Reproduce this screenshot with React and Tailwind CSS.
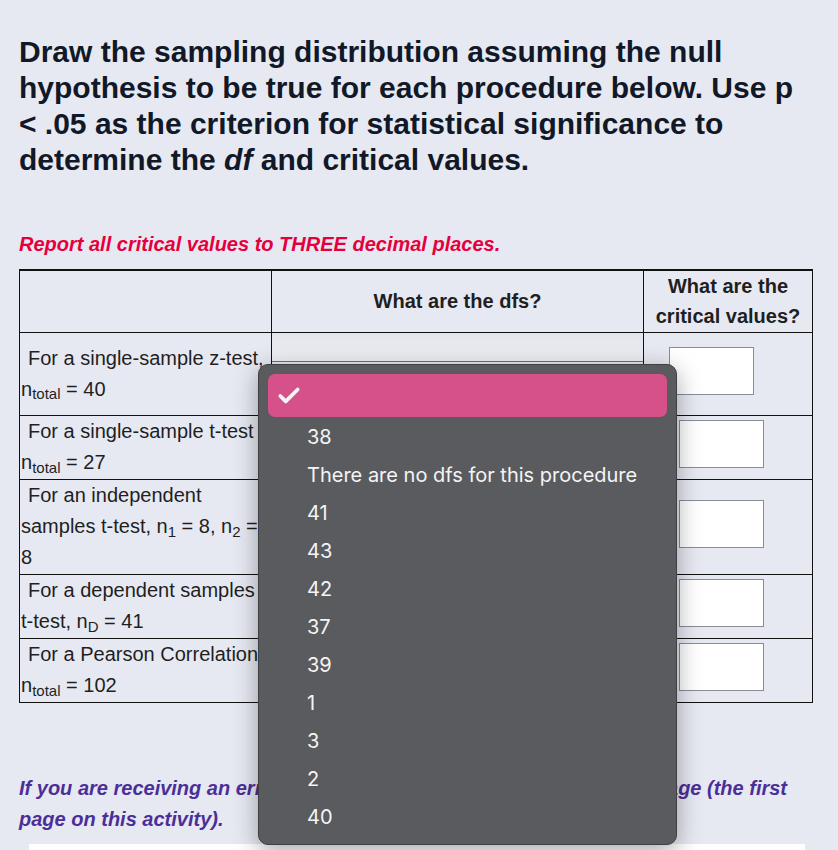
import { Check } from "lucide-react";

const options = ["38", "There are no dfs for this procedure", "41", "43", "42", "37", "39", "1", "3", "2", "40"];

const rows = [
    {
        h: "h-[83px]",
        box: "ml-[25px]",
        lines: [
            <> For a single-sample z-test,</>,
            <>n<sub className="text-[15px]">total</sub> = 40</>,
        ],
    },
    {
        h: "h-[64px]",
        box: "ml-[35px]",
        lines: [
            <> For a single-sample t-test</>,
            <>n<sub className="text-[15px]">total</sub> = 27</>,
        ],
    },
    {
        h: "h-[95px]",
        box: "ml-[35px]",
        lines: [
            <> For an independent</>,
            <>samples t-test, n<sub className="text-[15px]">1</sub> = 8, n<sub className="text-[15px]">2</sub> =</>,
            <>8</>,
        ],
    },
    {
        h: "h-[64px]",
        box: "ml-[35px]",
        lines: [
            <> For a dependent samples</>,
            <>t-test, n<sub className="text-[15px]">D</sub> = 41</>,
        ],
    },
    {
        h: "h-[64px]",
        box: "ml-[35px]",
        lines: [
            <> For a Pearson Correlation</>,
            <>n<sub className="text-[15px]">total</sub> = 102</>,
        ],
    },
];

function DfMenu() {
    return (
        <div className="absolute left-[258px] top-[364px] w-[419px] h-[481px] rounded-[10px] bg-[#5a5b5f] border border-[#3f4043] shadow-[0_6px_24px_rgba(0,0,0,0.35)] px-[9px] pt-[9px] font-['Inter',sans-serif] text-[20px] text-[#f4f4f5]">
            <div className="h-[43px] rounded-[7px] bg-[#d6518a] flex items-center pl-[8px]">
                <Check size={26} strokeWidth={3.5} />
            </div>
            {options.map((o) => (
                <div key={o} className="h-[38px] flex items-center pl-[39px] pt-[1px]">
                    {o}
                </div>
            ))}
        </div>
    );
}

export default function App() {
    return (
        <div className="relative min-h-[850px] bg-[#e7e9f2] font-['Liberation_Sans',Arial,sans-serif] overflow-hidden">
            <div className="pl-[19px] pr-[25px] pt-[34px]">
                <h1 className="text-[30px] leading-[36px] font-bold text-[#111827] max-w-[790px]">
                    Draw the sampling distribution assuming the null hypothesis to be true for each procedure below. Use p &lt; .05 as the criterion for statistical significance to determine the <i>df</i> and critical values.
                </h1>

                <p className="mt-[54px] text-[20px] leading-[24px] font-bold italic text-[#e5003d]">
                    Report all critical values to THREE decimal places.
                </p>

                <table className="mt-[13px] w-[794px] border-collapse text-[20px] text-[#1f1f1f]">
                    <thead>
                        <tr className="h-[62px] border-t-2 border-[#111]">
                            <th className="w-[252px] border border-[#111]"></th>
                            <th className="w-[372px] border border-[#111] font-bold">What are the dfs?</th>
                            <th className="border border-[#111] font-bold leading-[30px]">
                                What are the<br />critical values?
                            </th>
                        </tr>
                    </thead>
                    <tbody>
                        {rows.map((r, i) => (
                            <tr key={i} className={r.h}>
                                <td className="border border-[#111] align-middle leading-[31px] pl-[1px]">
                                    <div className="overflow-hidden whitespace-nowrap">
                                        {r.lines.map((l, j) => (
                                            <div key={j} className={j === 0 ? "pl-[7px]" : ""}>{l}</div>
                                        ))}
                                    </div>
                                </td>
                                <td className="border border-[#111] align-top">
                                    {i === 0 && (
                                        <div className="h-[29px] bg-gradient-to-b from-[#e3e5ec] to-[#eef0f5] border-b border-[#4a78b5]"></div>
                                    )}
                                </td>
                                <td className="border border-[#111] align-middle">
                                    <div className={`${r.box} mb-[6px] w-[85px] h-[48px] bg-white border border-[#878c96]`}></div>
                                </td>
                            </tr>
                        ))}
                    </tbody>
                </table>

                <p className="mt-[70px] max-w-[800px] -mr-[10px] text-[20px] leading-[31px] font-bold italic text-[#4b2f99]">
                    If you are receiving an error message, please go back to the Home page (the first page on this activity).
                </p>

                <div className="mt-[9px] ml-[10px] w-[776px] h-[40px] bg-white"></div>
            </div>

            <DfMenu />
        </div>
    );
}
